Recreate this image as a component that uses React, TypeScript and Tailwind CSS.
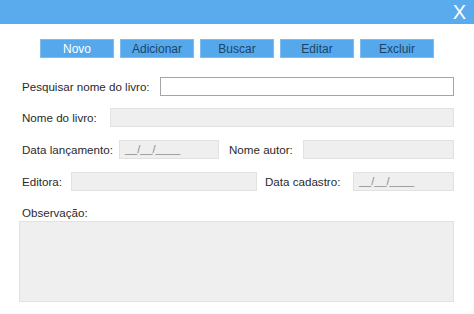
import React from 'react';

const font = { fontFamily: '"Liberation Sans", Arial, sans-serif' };

const Field = ({ className, text }: { className: string; text?: string }) => (
  <div className={`h-[19px] bg-[#efefef] border border-[#e2e2e2] flex items-center px-[5px] text-[11px] text-[#8a8a8a] ${className}`}>
    {text}
  </div>
);

const buttons = ['Novo', 'Adicionar', 'Buscar', 'Editar', 'Excluir'];

export default function App() {
  return (
    <div className="w-[474px] h-[314px] bg-white text-[#2a2a2a] text-[11.6px] overflow-hidden" style={font}>
      {/* title bar */}
      <div className="h-[24px] bg-[#59abee] flex items-center justify-end pr-[8px]">
        <span className="text-white text-[20px] font-light leading-none">X</span>
      </div>

      {/* toolbar */}
      <div className="flex gap-[6px] pl-[40px] mt-[15px]">
        {buttons.map((b, i) => (
          <button
            key={b}
            className={`w-[74px] h-[19px] bg-[#55a8ec] border border-[#7dbcf0] text-[12px] leading-none ${
              i === 0 ? 'text-white' : 'text-[#1d4566]'
            }`}
          >
            {b}
          </button>
        ))}
      </div>

      <div className="pl-[22px] pr-[20px] mt-[19px] flex flex-col">
        <div className="flex items-center h-[19px]">
          <span className="w-[138px]">Pesquisar nome do livro:</span>
          <div className="flex-1 h-[19px] bg-white border border-[#a5a5a5]" />
        </div>

        <div className="flex items-center h-[19px] mt-[12px]">
          <span className="w-[88px]">Nome do livro:</span>
          <Field className="flex-1" />
        </div>

        <div className="flex items-center h-[19px] mt-[13px]">
          <span className="w-[97px]">Data lançamento:</span>
          <Field className="w-[100px]" text="__/__/____" />
          <span className="ml-[10px] w-[74px]">Nome autor:</span>
          <Field className="flex-1" />
        </div>

        <div className="flex items-center h-[19px] mt-[13px]">
          <span className="w-[49px]">Editora:</span>
          <Field className="w-[186px]" />
          <span className="ml-[8px] w-[88px]">Data cadastro:</span>
          <Field className="flex-1" text="__/__/____" />
        </div>

        <span className="mt-[14px] leading-[15px]">Observação:</span>
        <div className="-ml-[3px] mt-[1px] h-[81px] bg-[#efefef] border border-[#e2e2e2]" />
      </div>
    </div>
  );
}
